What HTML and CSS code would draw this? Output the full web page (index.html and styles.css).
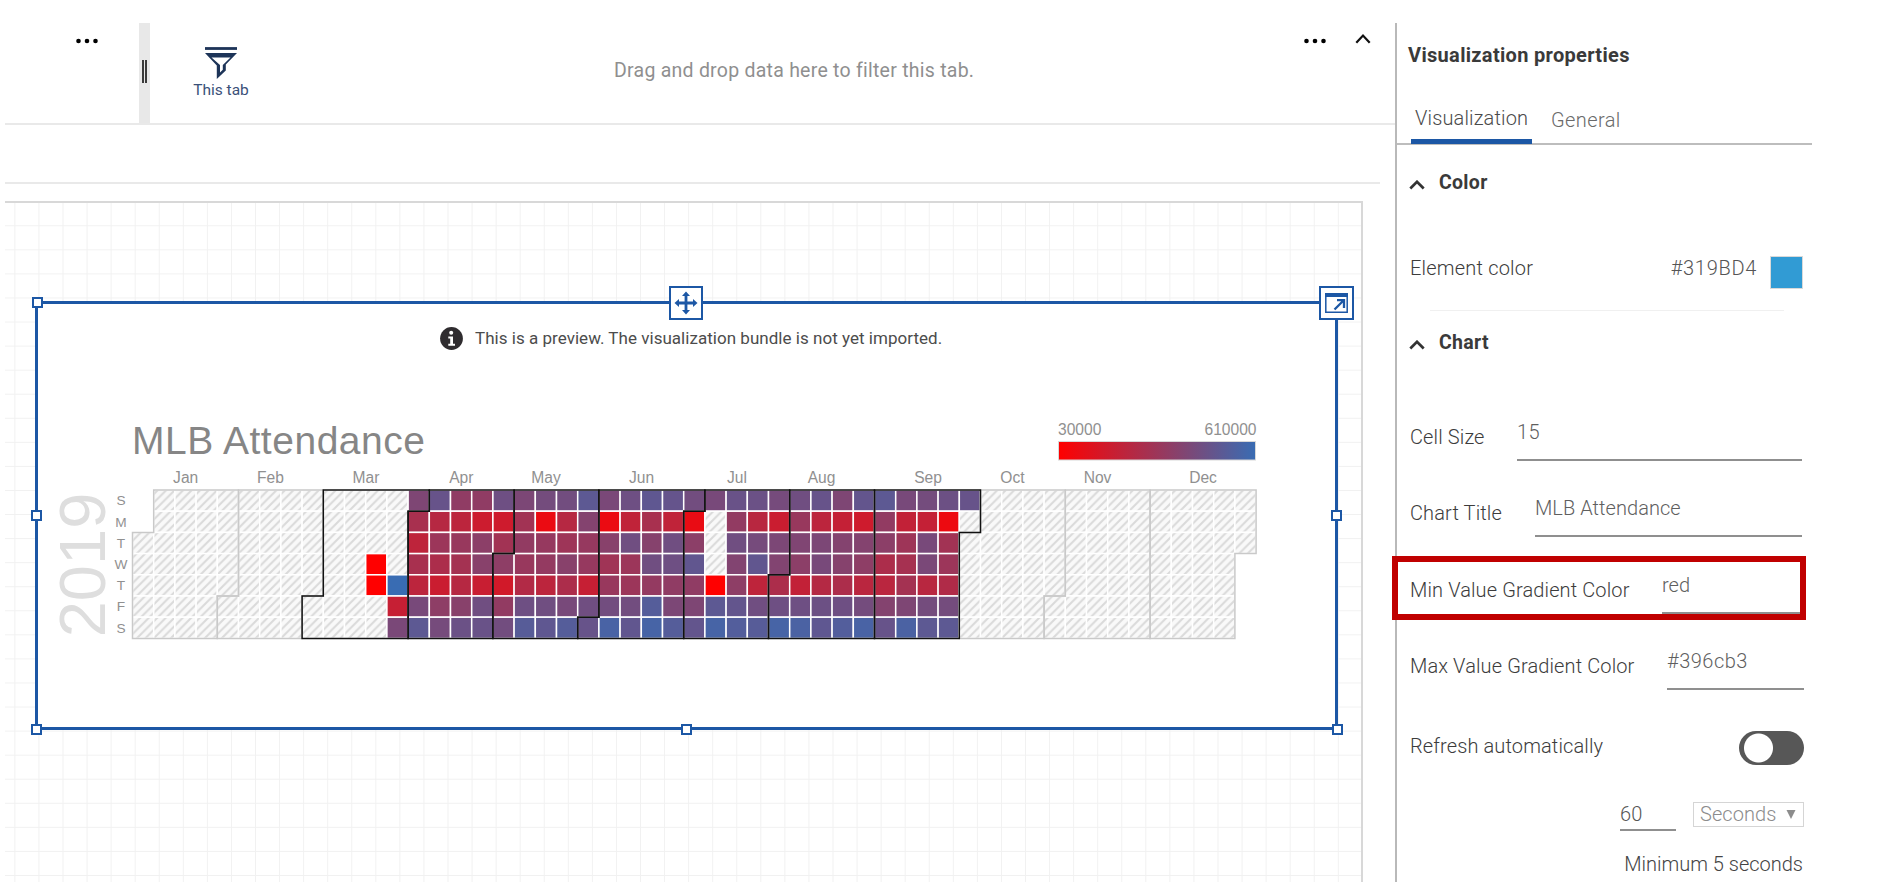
FILE: index.html
```html
<!DOCTYPE html>
<html lang="en">
<head>
<meta charset="utf-8">
<title>MLB Attendance dashboard</title>
<link rel="stylesheet" href="styles.css">
</head>
<body>
<div class="app">
  <main class="main">
    <header class="filterbar">
      <div class="all-tabs">
        <svg class="dots" width="24" height="8" viewBox="0 0 24 8"><circle cx="3.5" cy="4" r="2.3"/><circle cx="12" cy="4" r="2.3"/><circle cx="20.5" cy="4" r="2.3"/></svg>
      </div>
      <div class="splitter"><div class="grip"></div></div>
      <div class="this-tab">
        <svg width="32" height="32" viewBox="0 0 32 32"><path d="M0 1.5H32" stroke="#1d3458" stroke-width="2.8"/><path d="M0 6H32L20.800 17.500V23.500L11.800 32V18.500Z" fill="#1d3458"/><path d="M6.500 10.500H25.500L17.800 18V22.800L15 25.500V18Z" fill="#fff"/></svg>
        <span>This tab</span>
      </div>
      <div class="drop-hint"><span>Drag and drop data here to filter this tab.</span></div>
      <div class="bar-actions">
        <svg class="dots" width="24" height="8" viewBox="0 0 24 8"><circle cx="3.5" cy="4" r="2.3"/><circle cx="12" cy="4" r="2.3"/><circle cx="20.500" cy="4" r="2.3"/></svg>
        <svg class="collapse" width="16" height="10" viewBox="0 0 16 10"><path d="M1.300 8.700L8 1.600L14.700 8.700" fill="none" stroke="#111" stroke-width="2.2"/></svg>
      </div>
    </header>
    <div class="tabstrip"></div>
    <div class="canvas">
      <section class="widget">
        <div class="notice">
          <svg width="23" height="23" viewBox="0 0 23 23"><circle cx="11.500" cy="11.500" r="11.400" fill="#2f2c2f"/><circle cx="11.200" cy="5.800" r="2" fill="#fff"/><path d="M8.300 9.500H13V16.700H15V18.700H8.300V16.700H10.200V11.500H8.300Z" fill="#fff"/></svg>
          <span>This is a preview. The visualization bundle is not yet imported.</span>
        </div>
        <svg class="chart" id="chart" width="1230" height="250" viewBox="40 400 1230 250">
          <defs>
            <pattern id="hatch" patternUnits="userSpaceOnUse" width="8.480" height="8.480" x="132.500" y="490">
              <rect width="8.480" height="8.480" fill="#f9f9f9"/>
              <path d="M-1 1L1 -1M0 8.480L8.480 0M7.480 9.480L9.480 7.480" stroke="#dadada" stroke-width="2"/>
            </pattern>
            <linearGradient id="scale"><stop offset="0" stop-color="#ff0000"/><stop offset="1" stop-color="#396cb3"/></linearGradient>
          </defs>
          <text class="chart-title" x="132" y="454.300" textLength="293">MLB Attendance</text>
          <text class="axis" x="1058" y="434.800">30000</text>
          <text class="axis end" x="1256.500" y="434.800">610000</text>
          <rect x="1058.500" y="441.500" width="197" height="18.500" fill="url(#scale)" stroke="#d8d8d8"/>
          <text class="year" transform="translate(104.600 565) rotate(-90)">2019</text>
        </svg>
        <i class="handle nw"></i><i class="handle w"></i><i class="handle sw"></i><i class="handle s"></i><i class="handle e"></i><i class="handle se"></i>
        <div class="tool move"><svg width="24" height="24" viewBox="0 0 24 24"><path d="M12 3V21M3 12H21" stroke="#1c57a5" stroke-width="2.800"/><path d="M12 0.500L16 5H8ZM12 23.500L16 19H8ZM0.500 12L5 8V16ZM23.500 12L19 8V16Z" fill="#1c57a5"/></svg></div>
        <div class="tool expand"><svg width="23" height="20" viewBox="0 0 23 20"><path d="M0.800 0.800H22.200V19.200H0.800Z" fill="#fff" stroke="#1c57a5" stroke-width="1.500"/><path d="M0 0H23V4H0Z" fill="#1c57a5"/><path d="M9.500 16.500L18.500 7.500M12 7.200H19V15" fill="none" stroke="#1c57a5" stroke-width="2.300"/></svg></div>
      </section>
    </div>
  </main>
  <aside class="panel">
    <h1 class="panel-title">Visualization properties</h1>
    <nav class="tabs">
      <span class="tab active">Visualization</span>
      <span class="tab">General</span>
    </nav>
    <h2 class="section color-head"><svg width="16" height="10" viewBox="0 0 16 10"><path d="M1.300 8.500L8 1.800L14.700 8.500" fill="none" stroke="#333" stroke-width="2.700"/></svg><span>Color</span></h2>
    <div class="swatch-row">
      <span class="label">Element color</span>
      <span class="hex">#319BD4</span>
      <i class="swatch"></i>
    </div>
    <h2 class="section chart-head"><svg width="16" height="10" viewBox="0 0 16 10"><path d="M1.300 8.500L8 1.800L14.700 8.500" fill="none" stroke="#333" stroke-width="2.700"/></svg><span>Chart</span></h2>
    <div class="fields">
      <div class="field f-size"><label>Cell Size</label><div class="value">15</div></div>
      <div class="field f-title"><label>Chart Title</label><div class="value">MLB Attendance</div></div>
      <div class="field f-min"><label>Min Value Gradient Color</label><div class="value">red</div><i class="highlight"></i></div>
      <div class="field f-max"><label>Max Value Gradient Color</label><div class="value">#396cb3</div></div>
    </div>
    <div class="refresh"><span class="label">Refresh automatically</span><i class="toggle"></i></div>
    <div class="interval">
      <span class="amount">60</span>
      <span class="select"><span>Seconds</span><svg width="10" height="9" viewBox="0 0 10 9"><path d="M0.500 0H9.500L5 9Z" fill="#8c8c8c"/></svg></span>
    </div>
    <div class="minimum"><span>Minimum 5 seconds</span></div>
  </aside>
</div>
<script src="chart.js"></script>
</body>
</html>
```
FILE: styles.css
```css
* { box-sizing: border-box; }
body { margin: 0; background: #fff; font-family: Roboto, "Open Sans", sans-serif; font-weight: 300; color: #3d3d3d; overflow: hidden; }
svg { display: block; flex: none; }
i { font-style: normal; }

.app { display: flex; width: 1877px; height: 882px; padding: 23px 0 0 5px; overflow: hidden; }
.main { width: 1390px; flex: none; display: flex; flex-direction: column; }

/* filter bar */
.filterbar { display: flex; height: 102px; border-bottom: 2px solid #e9e9e9; flex: none; }
.all-tabs { width: 134px; padding: 14px 0 0 70px; }
.splitter { width: 11px; background: #e8e8e8; display: flex; align-items: center; justify-content: center; }
.grip { width: 5px; height: 23px; border: solid #3a3a3a; border-width: 0 2px; margin-bottom: 3px; }
.this-tab { width: 142px; padding-top: 24px; display: flex; flex-direction: column; align-items: center; color: #3a5078; font-weight: 400; font-size: 15.5px; line-height: 20px; }
.this-tab span { margin-top: 1px; }
.drop-hint { flex: 1; padding: 36px 0 0 322px; color: #8f8f8f; font-weight: 400; font-size: 19.5px; line-height: 24px; white-space: nowrap; letter-spacing: 0.25px; }
.bar-actions { display: flex; gap: 28px; padding: 11px 24px 0 0; }
.bar-actions .dots { margin-top: 3px; }

.tabstrip { width: 1375px; height: 59px; border-bottom: 2px solid #e9e9e9; flex: none; }

/* dashboard canvas */
.canvas {
  position: relative; width: 1358px; height: 681px; margin-top: 17px; flex: none;
  border: solid #d8d8d8; border-width: 2px 2px 0 0;
  background-image: linear-gradient(90deg, #f1f1f1 1.300px, transparent 1.300px), linear-gradient(#f1f1f1 1.300px, transparent 1.300px);
  background-size: 24.070px 24.070px;
  background-position: 9.400px 22.300px;
}
.widget { position: absolute; left: 30px; top: 98px; width: 1303px; height: 429px; border: 3px solid #1c57a5; background: #fff; }
.notice { display: flex; align-items: center; gap: 12px; height: 24px; margin: 22px 0 0 402px; font-size: 17px; letter-spacing: 0.03px; color: #4c4c4c; font-weight: 400; white-space: nowrap; }
.chart { margin: 50px 0 0 2px; }
.chart-title { font: 39px "Liberation Sans", Arial, sans-serif; fill: #868686; }
.axis { font: 15.600px "Liberation Sans", Arial, sans-serif; fill: #909090; }
.axis.mid { text-anchor: middle; }
.axis.end { text-anchor: end; }
.weekday { font: 13.700px "Liberation Sans", Arial, sans-serif; fill: #909090; text-anchor: middle; }
.year { font: 65px "Liberation Sans", Arial, sans-serif; fill: #dedede; text-anchor: middle; }
.month { fill: none; stroke-width: 1.500; }

.handle { position: absolute; width: 11px; height: 11px; border: 2px solid #1c57a5; background: #fff; }
.nw { left: -6px; top: -7px; }
.w { left: -7px; top: 206px; }
.sw { left: -7px; top: 420px; }
.s { left: 643px; top: 420px; }
.e { left: 1293px; top: 206px; }
.se { left: 1294px; top: 420px; }
.tool { position: absolute; display: grid; place-items: center; height: 34px; border: 2px solid #1c57a5; background: #fff; }
.move { left: 631px; top: -18px; width: 34px; }
.expand { left: 1281px; top: -18px; width: 35px; }

/* properties panel */
.panel { width: 417px; border-left: 2px solid #b9b9b9; font-size: 20px; line-height: 24px; white-space: nowrap; letter-spacing: 0.050px; }
.panel-title { margin: 20px 0 0 11px; font-size: 20px; line-height: 24px; font-weight: 700; color: #3a3a3a; letter-spacing: 0.320px; }
.tabs { display: flex; gap: 15px; height: 78px; padding: 38px 0 0 14px; border-bottom: 2px solid #bdbdbd; }
.tab { height: 39px; padding: 3px 4px 0; color: #6a6a6a; letter-spacing: 0.400px; }
.tab.active { width: 121px; padding-top: 1px; color: #4a4a4a; border-bottom: 5px solid #1c57a5; letter-spacing: 0.150px; }
.section { display: flex; align-items: center; gap: 14px; margin: 0 0 0 12px; font-size: 19.500px; line-height: 24px; font-weight: 700; color: #3a3a3a; letter-spacing: 0.300px; }
.section svg { margin-top: 3px; }
.color-head { margin-top: 26px; }
.chart-head { margin-top: 20px; }
.swatch-row { display: flex; height: 55px; margin: 61px 9px 0 13px; position: relative; }
.swatch-row::after { content: ""; position: absolute; left: 20px; right: 19px; bottom: 0; height: 1px; background: #f0f0f0; }
.label, .field label { color: #3c3c3c; }
.swatch-row .label { letter-spacing: 0.200px; }
.hex { margin-left: auto; color: #555; letter-spacing: 0.700px; }
.swatch { width: 33px; height: 33px; margin: 0 0 0 13px; border: 1px solid #d9d9d9; background: #319bd4; }
.fields { margin: 65px 0 0 13px; }
.field { position: relative; display: flex; height: 76.400px; }
.field label { padding-top: 5px; flex: none; letter-spacing: 0.120px; }
.field .value { height: 41px; margin-left: auto; border-bottom: 2px solid #8f8f8f; color: #5f5f5f; }
.f-size { width: 392px; }
.f-size .value { width: 285px; letter-spacing: 0.400px; }
.f-title { width: 392px; }
.f-title .value { width: 267px; }
.f-min { width: 392px; }
.f-min .value { width: 140px; }
.f-max { width: 394px; }
.f-max .value { width: 137px; letter-spacing: 0.500px; }
.highlight { position: absolute; left: -18px; top: -17px; width: 414px; height: 64px; border: 6px solid #c00000; }
.refresh { display: flex; justify-content: space-between; height: 71px; width: 394px; margin: 5px 0 0 13px; padding-top: 3px; letter-spacing: 0.120px; }
.toggle { width: 65px; height: 34px; margin-top: -3px; border-radius: 17px; background: radial-gradient(circle 15px at 19.500px 17px, #fff 14px, transparent 15px), #575757; }
.interval { display: flex; justify-content: flex-end; gap: 17px; width: 407px; height: 50px; }
.amount { width: 56px; height: 29px; border-bottom: 2px solid #8f8f8f; color: #555; }
.select { display: flex; align-items: center; gap: 10px; width: 111px; height: 25px; padding-left: 6px; border: 1px solid #d5d5d5; color: #8c8c8c; }
.minimum { width: 406px; text-align: right; color: #444; letter-spacing: 0; }
```
FILE: chart.js
```javascript
const NS = "http://www.w3.org/2000/svg";
const chart = document.getElementById("chart");
const X0 = 132.5, Y0 = 490, STEP = 21.2;

function add(name, attrs, text) {
  const el = document.createElementNS(NS, name);
  for (const key in attrs) el.setAttribute(key, attrs[key]);
  if (text) el.textContent = text;
  chart.appendChild(el);
}

// Attendance per weekday as percent of the colour scale; the first value belongs to the given week.
const rows = [
  [13, "65 77 56 56 73 66 70 71 82 67 73 81 78 71 68 76 75 69 72 77 65 79 82 68 70 74 77"],
  [13, "44 37 34 26 25 47 10 37 62 10 32 44 32 11 - 55 36 27 52 34 30 25 55 31 30 9"],
  [13, "33 50 52 58 47 55 53 49 53 60 72 61 72 58 - 72 69 66 64 66 62 62 58 49 68 47"],
  [11, "0 - 44 42 46 60 57 52 54 60 53 48 50 72 73 80 - 63 80 63 58 68 61 57 42 45 67 50"],
  [11, "0 100 34 27 37 28 23 39 34 42 29 52 50 54 56 56 0 57 33 42 31 38 42 35 35 46 36 40"],
  [12, "29 68 57 60 72 55 73 72 68 72 71 71 86 66 65 82 79 72 73 73 74 73 70 62 65 70 70"],
  [12, "67 82 69 75 76 71 85 81 86 77 92 80 93 86 79 93 87 85 93 91 81 87 92 77 91 82 82"]
];
const values = rows.map(([start, list]) => {
  const out = {};
  list.split(" ").forEach((v, i) => { if (v !== "-") out[start + i] = +v / 100; });
  return out;
});
const mix = t => `rgb(${Math.round(255 - 198 * t)},${Math.round(108 * t)},${Math.round(179 * t)})`;

// 1 January 2019 is a Tuesday (weekday 2).
for (let day = 0; day < 365; day++) {
  const week = Math.floor((day + 2) / 7), dow = (day + 2) % 7;
  const t = values[dow][week];
  add("rect", {
    x: X0 + week * STEP, y: Y0 + dow * STEP, width: STEP, height: STEP,
    fill: t === undefined ? "url(#hatch)" : mix(t), stroke: "#fff", "stroke-width": 1.5
  });
}

const lengths = [31, 28, 31, 30, 31, 30, 31, 31, 30, 31, 30, 31];
const outlines = [];
let first = 2;
lengths.forEach((n, m) => {
  const last = first + n - 1;
  const w0 = Math.floor(first / 7), d0 = first % 7, w1 = Math.floor(last / 7), d1 = last % 7;
  const x = w => X0 + w * STEP, y = d => Y0 + d * STEP;
  const d = `M${x(w0 + 1)} ${y(d0)}H${x(w0)}V${y(7)}H${x(w1)}V${y(d1 + 1)}H${x(w1 + 1)}V${y(0)}H${x(w0 + 1)}Z`;
  outlines.push({ d, active: m >= 2 && m <= 8 });
  first += n;
});
outlines.sort((a, b) => a.active - b.active).forEach(o =>
  add("path", { class: "month", d: o.d, stroke: o.active ? "#111" : "#c9c9c9" }));

const months = { Jan: 185.7, Feb: 270.5, Mar: 366, Apr: 461.3, May: 546, Jun: 641.5, Jul: 737, Aug: 821.5, Sep: 928, Oct: 1012.5, Nov: 1097.5, Dec: 1203 };
for (const name in months) add("text", { class: "axis mid", x: months[name], y: 482.7 }, name);
[..."SMTWTFS"].forEach((c, i) => add("text", { class: "weekday", x: 121, y: 505.4 + i * STEP }, c));
```
